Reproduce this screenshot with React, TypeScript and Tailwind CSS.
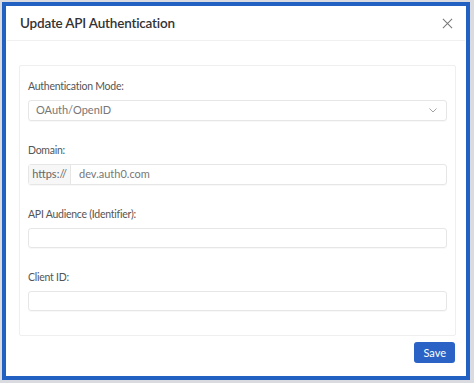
import React from 'react';

const FONT = { fontFamily: 'Lato, "Noto Sans", Arial, sans-serif' };

function Field({ label, children }: { label: string; children: React.ReactNode }) {
  return (
    <div className="flex flex-col">
      <label className="text-[10.5px] leading-[14px] text-[#555] mb-[7px] tracking-[-0.25px]">{label}</label>
      {children}
    </div>
  );
}

export default function App() {
  return (
    <div className="w-[474px] h-[383px] bg-[#d9dbe0] pt-[2px] pl-[2px]" style={FONT}>
      <div className="w-[468px] h-[378px] border-4 border-[#2260c2] bg-white flex flex-col">
        {/* header */}
        <div className="h-[35px] flex items-center justify-between pl-[13px] pr-[10px] border-b border-[#f0f0f0] mx-[1px]">
          <h1 className="text-[13.5px] font-semibold text-[#333] tracking-[-0.2px]">Update API Authentication</h1>
          <button className="text-[#777] w-4 h-4 flex items-center justify-center">
            <svg width="11" height="11" viewBox="0 0 12 12" fill="none" stroke="currentColor" strokeWidth="1.1">
              <path d="M1 1L11 11M11 1L1 11" />
            </svg>
          </button>
        </div>

        {/* body */}
        <div className="px-[13px] pt-[24px]">
          <div className="border border-[#efefef] rounded-[2px] px-[8px] pt-[13px] pb-[24px] flex flex-col gap-[22px] w-[437px]">
            <Field label="Authentication Mode:">
              <div className="h-[21px] border border-[#e6e6e6] rounded-[3px] flex items-center justify-between pl-[7px] pr-[9px] text-[11px] text-[#777] shadow-[0_1px_1px_rgba(0,0,0,0.03)]">
                <span>OAuth/OpenID</span>
                <svg width="8" height="5" viewBox="0 0 8 5" fill="none" stroke="#999" strokeWidth="0.9">
                  <path d="M0.5 0.5L4 4L7.5 0.5" />
                </svg>
              </div>
            </Field>

            <Field label="Domain:">
              <div className="h-[21px] border border-[#e6e6e6] rounded-[3px] flex text-[11px] shadow-[0_1px_1px_rgba(0,0,0,0.03)]">
                <span className="w-[42px] bg-[#f7f7f7] border-r border-[#e6e6e6] flex items-center justify-center text-[#666]">https://</span>
                <span className="flex items-center pl-[8px] text-[#777]">dev.auth0.com</span>
              </div>
            </Field>

            <Field label="API Audience (Identifier):">
              <div className="h-[20px] border border-[#e6e6e6] rounded-[3px] shadow-[0_1px_1px_rgba(0,0,0,0.03)]" />
            </Field>

            <Field label="Client ID:">
              <div className="h-[20px] border border-[#e6e6e6] rounded-[3px] shadow-[0_1px_1px_rgba(0,0,0,0.03)]" />
            </Field>
          </div>
        </div>

        {/* footer */}
        <div className="flex justify-end pr-[11px] pt-[6px]">
          <button className="h-[21px] px-[9px] bg-[#2a63c5] rounded-[3px] text-white text-[11px] leading-none">Save</button>
        </div>
      </div>
    </div>
  );
}
